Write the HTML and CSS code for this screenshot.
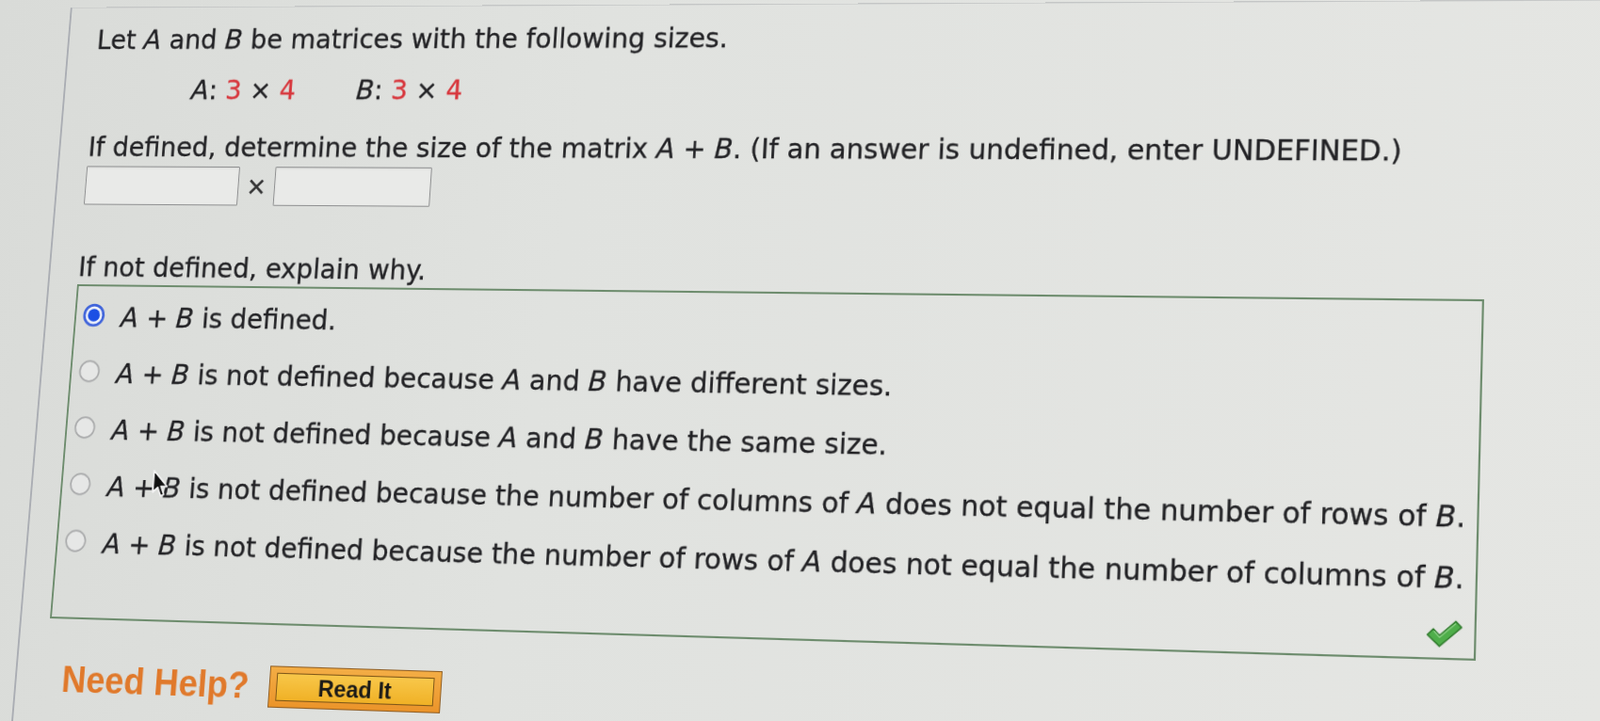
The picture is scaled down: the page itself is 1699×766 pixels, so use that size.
FILE: index.html
```html
<!DOCTYPE html>
<html lang="en">
<head>
<meta charset="utf-8">
<title>Matrix sizes</title>
<link rel="stylesheet" href="styles.css">
</head>
<body>
<div class="page">
  <div class="sheet">
    <p class="line">Let <i>A</i> and <i>B</i> be matrices with the following sizes.</p>
    <div class="line dims">
      <span><i>A</i>: <span class="num">3</span> × <span class="num">4</span></span>
      <span><i>B</i>: <span class="num">3</span> × <span class="num">4</span></span>
    </div>
    <p class="line l3">If defined, determine the size of the matrix <i>A</i> + <i>B</i>. (If an answer is undefined, enter UNDEFINED.)</p>
    <div class="size-row">
      <input class="field" type="text" aria-label="rows">
      <span class="times">×</span>
      <input class="field" type="text" aria-label="columns">
    </div>
    <p class="line l4">If not defined, explain why.</p>
    <div class="choices">
      <div class="choice">
        <svg class="radio" viewBox="0 0 24 24"><circle cx="12" cy="12" r="10" fill="#eef1fa" stroke="#4064da" stroke-width="2.6"/><circle cx="12" cy="12" r="6.3" fill="#1c4fe4"/></svg>
        <span><i>A</i> + <i>B</i> is defined.</span>
      </div>
      <div class="choice">
        <svg class="radio" viewBox="0 0 24 24"><circle cx="12" cy="12" r="10" fill="#e6e7e6" stroke="#a9aaab" stroke-width="1.6"/></svg>
        <span><i>A</i> + <i>B</i> is not defined because <i>A</i> and <i>B</i> have different sizes.</span>
      </div>
      <div class="choice">
        <svg class="radio" viewBox="0 0 24 24"><circle cx="12" cy="12" r="10" fill="#e6e7e6" stroke="#a9aaab" stroke-width="1.6"/></svg>
        <span><i>A</i> + <i>B</i> is not defined because <i>A</i> and <i>B</i> have the same size.</span>
      </div>
      <div class="choice">
        <svg class="radio" viewBox="0 0 24 24"><circle cx="12" cy="12" r="10" fill="#e6e7e6" stroke="#a9aaab" stroke-width="1.6"/></svg>
        <span><i>A</i> + <i>B</i> is not defined because the number of columns of <i>A</i> does not equal the number of rows of <i>B</i>.</span>
        <svg class="cursor" viewBox="0 0 14 24"><path d="M1 1 L1 19 L5.2 15 L8.2 22 L11 20.8 L8 14 L13.5 14 Z" fill="#111" stroke="#f4f4f4" stroke-width="1.4" stroke-linejoin="round"/></svg>
      </div>
      <div class="choice">
        <svg class="radio" viewBox="0 0 24 24"><circle cx="12" cy="12" r="10" fill="#e6e7e6" stroke="#a9aaab" stroke-width="1.6"/></svg>
        <span><i>A</i> + <i>B</i> is not defined because the number of rows of <i>A</i> does not equal the number of columns of <i>B</i>.</span>
      </div>
      <div class="choice-foot">
        <svg class="check" viewBox="0 0 36 26"><path d="M2 14.5 L7.5 9 L13.5 15 L28.5 1.5 L34 7 L13.5 25 Z" fill="#4fae4a" stroke="#2f7a2c" stroke-width="1.4" stroke-linejoin="round"/><path d="M8 11 L13.5 16.5 L28.5 3.5" fill="none" stroke="#8fd388" stroke-width="1.2"/></svg>
      </div>
    </div>
    <div class="help-row">
      <span class="need-help">Need Help?</span>
      <span class="read-it"><span class="read-it-inner">Read It</span></span>
    </div>
  </div>
</div>
</body>
</html>
```

FILE: styles.css
```css
html {
  background: linear-gradient(100deg, #d9dbd8 0%, #e0e2df 35%, #e5e6e3 100%);
  height: 766px;
  overflow: hidden;
}

body {
  margin: 0;
  height: 766px;
  overflow: hidden;
}

.page {
  width: 1699px;
  height: 766px;
  transform-origin: 0 0;
  transform: matrix3d(0.907797, -0.0049473, 0, -0.000048715,
                      -0.082427, 0.959694, 0, -0.000037858,
                      0, 0, 1, 0,
                      31.1884, 7.9189, 0, 1);
  font-family: "DejaVu Sans", Verdana, sans-serif;
  color: #222225;
  -webkit-text-stroke: 0.3px #222225;
}

.sheet {
  margin-left: 48px;
  height: 766px;
  box-sizing: border-box;
  border-left: 2px solid #aaadb3;
  border-top: 1px solid #c4c6c6;
  padding: 17px 0 0 32px;
}

.line {
  margin: 0;
  font-size: 29px;
  line-height: 36px;
  white-space: nowrap;
}

.dims {
  margin-top: 19px;
  padding-left: 113px;
  display: flex;
  gap: 68px;
}

.num {
  color: #d7363c;
  -webkit-text-stroke: 0.3px #d7363c;
}

.l3 {
  margin-top: 26px;
}

.size-row {
  margin-top: 3px;
  display: flex;
  align-items: center;
  height: 42px;
}

.field {
  width: 175px;
  height: 42px;
  margin: 0;
  padding: 0;
  box-sizing: border-box;
  border: 1px solid #8e8f90;
  border-radius: 1px;
  background: #e9eae8;
  box-shadow: inset 0 1px 2px rgba(0, 0, 0, 0.08);
}

.times {
  width: 40px;
  text-align: center;
  font-size: 27px;
  line-height: 42px;
  color: #333;
}

.l4 {
  margin-top: 49px;
}

.choices {
  margin-top: 1px;
  width: 1494px;
  height: 355px;
  box-sizing: border-box;
  border: 2px solid #6d8c6d;
  padding: 3px 10px 0 7px;
}

.choice {
  position: relative;
  display: flex;
  align-items: center;
  height: 60px;
  font-size: 29px;
  line-height: 60px;
  white-space: nowrap;
}

.radio {
  flex: none;
  width: 26px;
  height: 26px;
  margin-right: 18px;
  margin-bottom: 5px;
}

.cursor {
  position: absolute;
  left: 94px;
  top: 11px;
  width: 18px;
  height: 30px;
}

.choice-foot {
  height: 48px;
  display: flex;
  justify-content: flex-end;
  align-items: center;
}

.check {
  width: 38px;
  height: 27px;
}

.help-row {
  margin-top: 42px;
  padding-left: 19px;
  display: flex;
  align-items: center;
}

.need-help {
  font-family: "Liberation Sans", Arial, sans-serif;
  font-weight: bold;
  font-size: 38px;
  line-height: 43px;
  color: #e0792b;
  -webkit-text-stroke: 0;
  margin-right: 22px;
  white-space: nowrap;
}

.read-it {
  display: flex;
  width: 188px;
  height: 43px;
  box-sizing: border-box;
  border: 1px solid #8f5d22;
  background: linear-gradient(#f3ad45, #eb942a);
  padding: 6px 7px;
}

.read-it-inner {
  flex: 1;
  display: flex;
  align-items: center;
  justify-content: center;
  border: 1px solid #7e5617;
  background: linear-gradient(#f8c74a, #f0b126);
  font-family: "Liberation Sans", Arial, sans-serif;
  font-weight: bold;
  font-size: 24px;
  color: #1b1a18;
  -webkit-text-stroke: 0;
}
```
